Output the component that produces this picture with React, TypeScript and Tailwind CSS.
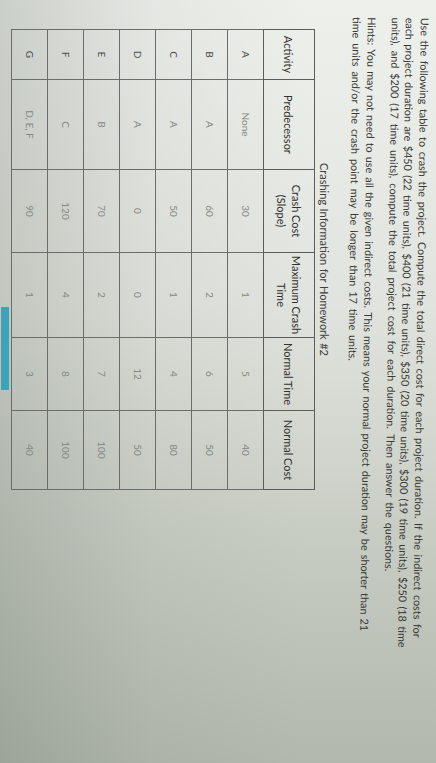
import React from 'react';

const headers = [
  ['Activity'],
  ['Predecessor'],
  ['Crash Cost', '(Slope)'],
  ['Maximum Crash', 'Time'],
  ['Normal Time'],
  ['Normal Cost'],
];

const rows = [
  ['A', 'None', '30', '1', '5', '40'],
  ['B', 'A', '60', '2', '6', '50'],
  ['C', 'A', '50', '1', '4', '80'],
  ['D', 'A', '0', '0', '12', '50'],
  ['E', 'B', '70', '2', '7', '100'],
  ['F', 'C', '120', '4', '8', '100'],
  ['G', 'D, E, F', '90', '1', '3', '40'],
];

const colWidths = ['w-[50px]', 'w-[90px]', 'w-[83px]', 'w-[85px]', 'w-[73px]', 'w-[79px]'];

// each printed line is spread to the length it has in the photo
const lines: { text: string; width: string; gap?: boolean }[] = [
  {
    text: 'Use the following table to crash the project. Compute the total direct cost for each project duration. If the indirect costs for',
    width: 'w-[620px]',
  },
  {
    text: 'each project duration are $450 (22 time units), $400 (21 time units), $350 (20 time units), $300 (19 time units), $250 (18 time',
    width: 'w-[630px]',
  },
  {
    text: 'units), and $200 (17 time units), compute the total project cost for each duration. Then answer the questions.',
    width: 'w-[554px]',
  },
  {
    text: 'Hints: You may not need to use all the given indirect costs. This means your normal project duration may be shorter than 21',
    width: 'w-[614px]',
    gap: true,
  },
  {
    text: 'time units and/or the crash point may be longer than 17 time units.',
    width: 'w-[344px]',
  },
];

export default function App() {
  return (
    <div className="w-[436px] h-[763px] overflow-hidden bg-[linear-gradient(90deg,rgba(80,92,80,0.22),rgba(80,92,80,0.06)_35%,rgba(80,92,80,0)_70%),linear-gradient(180deg,#eef0ec,#e1e4de_40%,#c8cdc4_70%,#b2b8ae)]">
      {/* the photo is of a page turned a quarter clockwise */}
      <div className="w-[763px] h-[436px] origin-top-left [transform:translateX(436px)_rotate(90deg)] font-['Lato',sans-serif] text-[#363936]">
        <div className="pl-[18px] pt-[4px] text-[10.8px] leading-[14.5px] origin-top-left rotate-[0.7deg]">
          {lines.map((l) => (
            <div
              key={l.text}
              className={`flex justify-between gap-x-[2px] whitespace-nowrap ${l.width} ${l.gap ? 'mt-[9.5px]' : ''}`}
            >
              {l.text.split(' ').map((w, i) => (
                <span key={i}>{w}</span>
              ))}
            </div>
          ))}
        </div>

        <div className="w-[461px] ml-[29px] mt-[18px] flex justify-center">
          <div className="w-[193px] flex justify-between gap-x-[2px] whitespace-nowrap text-[11px] leading-[15px] text-[#3d403d]">
            {'Crashing Information for Homework #2'.split(' ').map((w, i) => (
              <span key={i}>{w}</span>
            ))}
          </div>
        </div>

        <table className="ml-[29px] mt-[2px] table-fixed border-collapse border border-[#4b4e4b]">
          <thead>
            <tr className="h-[51px]">
              {headers.map((h, i) => (
                <th
                  key={i}
                  className={`${colWidths[i]} border border-[#5a5d5a] p-0 align-middle text-[11px] leading-[15px] font-normal text-[#2f322f]`}
                >
                  {h.map((line) => (
                    <div key={line}>{line}</div>
                  ))}
                </th>
              ))}
            </tr>
          </thead>
          <tbody>
            {rows.map((r) => (
              <tr key={r[0]} className="h-[36px]">
                {r.map((c, i) => (
                  <td
                    key={i}
                    className={`border border-[#6a6d69] p-0 text-center align-middle text-[10px] ${
                      i === 0 ? 'text-[#4a4d4a]' : 'text-[#858a84]'
                    }`}
                  >
                    {c}
                  </td>
                ))}
              </tr>
            ))}
          </tbody>
        </table>

        <div className="ml-[307px] mt-[2px] w-[83px] h-[8px] bg-[#3fa2b6]" />
      </div>
    </div>
  );
}
